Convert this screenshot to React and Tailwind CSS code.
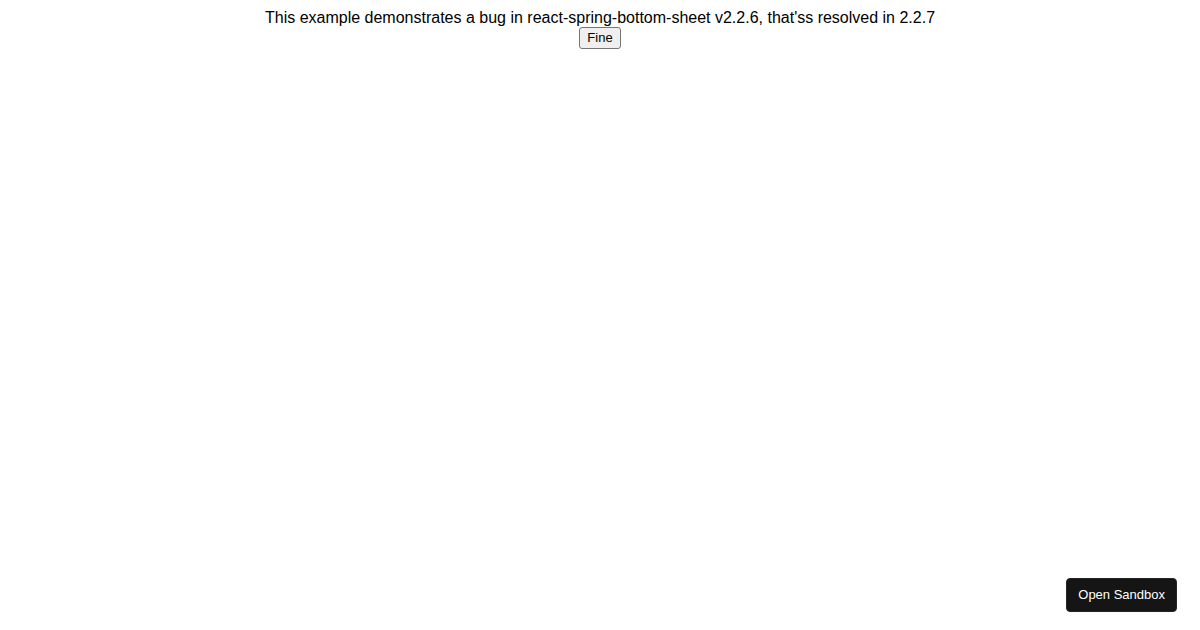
export default function App() {
  return (
    <div className="min-h-screen bg-white text-black font-['Liberation_Sans',Arial,sans-serif]">
      <main className="flex flex-col items-center px-2 pt-2">
        <p className="text-center text-[16px] leading-[19px]">
          This example demonstrates a bug in react-spring-bottom-sheet v2.2.6, that'ss resolved in 2.2.7
        </p>
        <button type="button" className="rounded-[3px] border border-[#767676] bg-[#efefef] px-[7px] py-[2px] text-[13px] leading-4">
          Fine
        </button>
      </main>
      <a
        href="#sandbox"
        className="fixed right-[23px] bottom-[18px] rounded-[4px] border border-[#252525] bg-[#151515] px-[11px] py-2 text-[13px] leading-4 text-white"
      >
        Open Sandbox
      </a>
    </div>
  );
}
